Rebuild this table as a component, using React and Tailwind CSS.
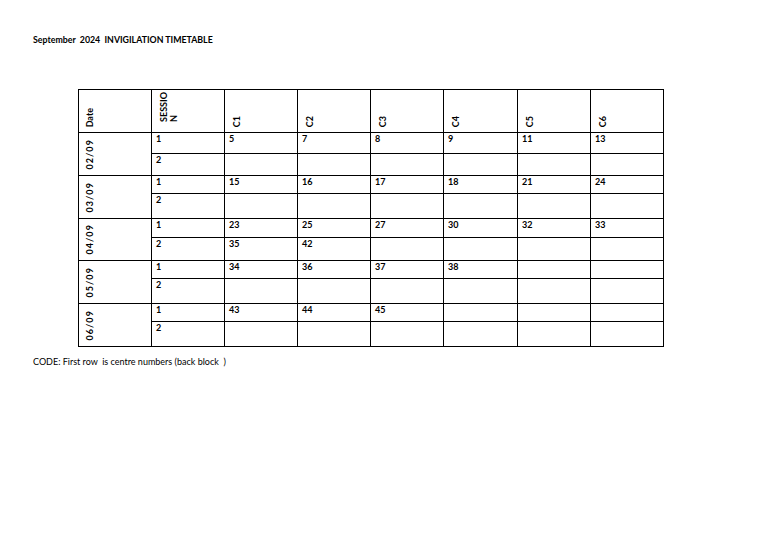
import React from "react";

const rows = [
  { date: "02/09", s1: ["5", "7", "8", "9", "11", "13"], s2: [] },
  { date: "03/09", s1: ["15", "16", "17", "18", "21", "24"], s2: [] },
  { date: "04/09", s1: ["23", "25", "27", "30", "32", "33"], s2: ["35", "42"] },
  { date: "05/09", s1: ["34", "36", "37", "38"], s2: [] },
  { date: "06/09", s1: ["43", "44", "45"], s2: [] },
];

const cols = ["C1", "C2", "C3", "C4", "C5", "C6"];

function Vert({ children, className = "" }) {
  return (
    <span className={"[writing-mode:vertical-rl] rotate-180 whitespace-nowrap leading-[10px] " + className}>
      {children}
    </span>
  );
}

function Cell({ children }) {
  return <div className="bg-white pl-[4px] pt-[1px] leading-[10px]">{children}</div>;
}

export default function App() {
  return (
    <div
      className="w-[768px] h-[537px] bg-white text-black pl-[33px] pt-[35px]"
      style={{ fontFamily: "Lato, 'Open Sans', sans-serif" }}
    >
      <div className="text-[8.8px] font-bold leading-[10px] whitespace-pre">
        {"September  2024  INVIGILATION TIMETABLE"}
      </div>
      <div className="ml-[45px] mt-[44px] w-[586px] grid grid-cols-[72px_72px_72px_72px_72px_73px_72px_72px] grid-rows-[42px_20px_21px_17px_24px_18px_22px_17px_24px_17px_24px] gap-px p-px bg-black text-[9px] font-bold">
        <div className="bg-white flex items-end pl-[6px] pb-[5px]">
          <Vert>Date</Vert>
        </div>
        <div className="bg-white flex items-end pl-[7px] pb-[10px]">
          <Vert>
            SESSIO
            <br />N
          </Vert>
        </div>
        {cols.map((c) => (
          <div key={c} className="bg-white flex items-end pl-[7px] pb-[5px]">
            <Vert>{c}</Vert>
          </div>
        ))}
        {rows.map((r) => (
          <React.Fragment key={r.date}>
            <div className="row-span-2 bg-white flex items-end pl-[6px] pb-[5px]">
              <Vert className="tracking-[1.1px]">{r.date}</Vert>
            </div>
            <Cell>1</Cell>
            {cols.map((c, i) => (
              <Cell key={"a" + c}>{r.s1[i] || ""}</Cell>
            ))}
            <Cell>2</Cell>
            {cols.map((c, i) => (
              <Cell key={"b" + c}>{r.s2[i] || ""}</Cell>
            ))}
          </React.Fragment>
        ))}
      </div>
      <div className="mt-[10px] text-[9px] leading-[10px] whitespace-pre">
        {"CODE: First row  is centre numbers (back block  )"}
      </div>
    </div>
  );
}
